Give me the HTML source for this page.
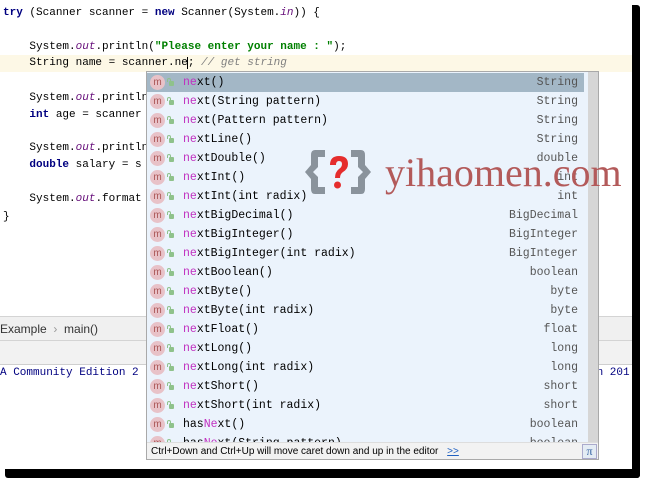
<!DOCTYPE html>
<html><head><meta charset="utf-8"><style>
*{margin:0;padding:0;box-sizing:border-box}
body{width:647px;height:484px;background:#fff;position:relative;overflow:hidden;font-family:"Liberation Mono",monospace}
.sh1{position:absolute;left:632px;top:5px;width:8px;height:473px;background:#000;border-radius:0 3px 3px 0}
.sh2{position:absolute;left:5px;top:469px;width:635px;height:9px;background:#000;border-radius:0 0 3px 3px}
.main{position:absolute;left:0;top:0;width:632px;height:469px;background:#fff;overflow:hidden}
.ln{position:absolute;left:3px;font-size:11px;white-space:pre;color:#000;line-height:14px}
.kw{color:#000080;font-weight:bold}
.st{color:#008000;font-weight:bold}
.fd{color:#660e7a;font-style:italic}
.cm{color:#808080;font-style:italic}
.hl{position:absolute;left:0;top:55px;width:632px;height:17px;background:#fdf8e6}
.bar1{position:absolute;left:0;top:316px;width:632px;height:25px;background:#f0f0f0;border-top:1px solid #d4d4d4;border-bottom:1px solid #d4d4d4;font-family:"Liberation Sans",sans-serif;font-size:12px;color:#333;line-height:25px}
.bar2{position:absolute;left:0;top:341px;width:632px;height:24px;background:#f2f2f2;border-bottom:1px solid #cfcfcf}
.con{position:absolute;top:366px;font-size:11px;color:#000080;white-space:pre;line-height:14px}
.pop{position:absolute;left:146px;top:71px;width:453px;height:389px;border:1px solid #a9a9a9;background:#ebf3fc;overflow:hidden}
.row{position:absolute;left:0;width:437px;height:19px;font-size:11.5px;line-height:19px;color:#000}
.row.sel{background:#a3b7c6}
.ic{position:absolute;left:3px;top:2px;width:15px;height:15px;border-radius:50%;background:#e8c2c8;color:#a55;font-family:"Liberation Sans",sans-serif;font-size:10px;line-height:15px;text-align:center}
.lk{position:absolute;left:22px;top:8px;width:5px;height:5px;background:#8fc28b;border-radius:1px}
.lk:before{content:"";position:absolute;left:-2px;top:-3px;width:2px;height:3px;border:1px solid #8fc28b;border-bottom:none;border-radius:2px 2px 0 0}
.nm{position:absolute;left:36px}
.nm b{color:#c030c0;font-weight:normal}
.ty{position:absolute;right:6px;color:#555}
.sb{position:absolute;left:441px;top:0;width:11px;height:370px;background:#d6d6d6}
.ft{position:absolute;left:0;top:370px;width:451px;height:18px;background:#f2f2f2;border-top:1px solid #ddd;font-family:"Liberation Sans",sans-serif;font-size:10px;line-height:17px;padding-left:4px;color:#000}
.ft u{color:#2060c0;margin-left:6px}
.pi{position:absolute;right:1px;top:1px;width:15px;height:15px;border:1px solid #aac;background:#e4ecf4;color:#3060a0;font-size:12px;line-height:13px;text-align:center;font-family:"Liberation Serif",serif}
.wm{position:absolute;left:385px;top:148px;font-family:"Liberation Serif",serif;font-size:40px;color:#b35a5a;line-height:50px}
</style></head><body>
<div class="sh1"></div><div class="sh2"></div>
<div class="main">
<div class="hl"></div>
<div class="ln" style="top:6px"><span class="kw">try</span> (Scanner scanner = <span class="kw">new</span> Scanner(System.<span class="fd">in</span>)) {</div>
<div class="ln" style="top:40px">    System.<span class="fd">out</span>.println(<span class="st">"Please enter your name : "</span>);</div>
<div class="ln" style="top:56px">    String name = scanner.ne<span style="border-left:1px solid #000;margin-left:-1px"></span>; <span class="cm">// get string</span></div>
<div class="ln" style="top:91px">    System.<span class="fd">out</span>.println</div>
<div class="ln" style="top:108px">    <span class="kw">int</span> age = scanner</div>
<div class="ln" style="top:141px">    System.<span class="fd">out</span>.println</div>
<div class="ln" style="top:158px">    <span class="kw">double</span> salary = s</div>
<div class="ln" style="top:192px">    System.<span class="fd">out</span>.format</div>
<div class="ln" style="top:210px">}</div>
<div class="bar1">Example &nbsp;<span style="color:#999">›</span>&nbsp; main()</div>
<div class="bar2"></div>
<div class="con" style="left:0">A Community Edition 2</div>
<div class="con" style="left:590px">on 201</div>
</div>
<div class="pop">
<div class="row sel" style="top:1px"><span class="ic">m</span><span class="lk"></span><span class="nm"><b>ne</b>xt()</span><span class="ty">String</span></div>
<div class="row" style="top:20px"><span class="ic">m</span><span class="lk"></span><span class="nm"><b>ne</b>xt(String pattern)</span><span class="ty">String</span></div>
<div class="row" style="top:39px"><span class="ic">m</span><span class="lk"></span><span class="nm"><b>ne</b>xt(Pattern pattern)</span><span class="ty">String</span></div>
<div class="row" style="top:58px"><span class="ic">m</span><span class="lk"></span><span class="nm"><b>ne</b>xtLine()</span><span class="ty">String</span></div>
<div class="row" style="top:77px"><span class="ic">m</span><span class="lk"></span><span class="nm"><b>ne</b>xtDouble()</span><span class="ty">double</span></div>
<div class="row" style="top:96px"><span class="ic">m</span><span class="lk"></span><span class="nm"><b>ne</b>xtInt()</span><span class="ty">int</span></div>
<div class="row" style="top:115px"><span class="ic">m</span><span class="lk"></span><span class="nm"><b>ne</b>xtInt(int radix)</span><span class="ty">int</span></div>
<div class="row" style="top:134px"><span class="ic">m</span><span class="lk"></span><span class="nm"><b>ne</b>xtBigDecimal()</span><span class="ty">BigDecimal</span></div>
<div class="row" style="top:153px"><span class="ic">m</span><span class="lk"></span><span class="nm"><b>ne</b>xtBigInteger()</span><span class="ty">BigInteger</span></div>
<div class="row" style="top:172px"><span class="ic">m</span><span class="lk"></span><span class="nm"><b>ne</b>xtBigInteger(int radix)</span><span class="ty">BigInteger</span></div>
<div class="row" style="top:191px"><span class="ic">m</span><span class="lk"></span><span class="nm"><b>ne</b>xtBoolean()</span><span class="ty">boolean</span></div>
<div class="row" style="top:210px"><span class="ic">m</span><span class="lk"></span><span class="nm"><b>ne</b>xtByte()</span><span class="ty">byte</span></div>
<div class="row" style="top:229px"><span class="ic">m</span><span class="lk"></span><span class="nm"><b>ne</b>xtByte(int radix)</span><span class="ty">byte</span></div>
<div class="row" style="top:248px"><span class="ic">m</span><span class="lk"></span><span class="nm"><b>ne</b>xtFloat()</span><span class="ty">float</span></div>
<div class="row" style="top:267px"><span class="ic">m</span><span class="lk"></span><span class="nm"><b>ne</b>xtLong()</span><span class="ty">long</span></div>
<div class="row" style="top:286px"><span class="ic">m</span><span class="lk"></span><span class="nm"><b>ne</b>xtLong(int radix)</span><span class="ty">long</span></div>
<div class="row" style="top:305px"><span class="ic">m</span><span class="lk"></span><span class="nm"><b>ne</b>xtShort()</span><span class="ty">short</span></div>
<div class="row" style="top:324px"><span class="ic">m</span><span class="lk"></span><span class="nm"><b>ne</b>xtShort(int radix)</span><span class="ty">short</span></div>
<div class="row" style="top:343px"><span class="ic">m</span><span class="lk"></span><span class="nm">has<b>Ne</b>xt()</span><span class="ty">boolean</span></div>
<div class="row" style="top:362px"><span class="ic">m</span><span class="lk"></span><span class="nm">has<b>Ne</b>xt(String pattern)</span><span class="ty">boolean</span></div>
<div class="sb"></div>
<div class="ft">Ctrl+Down and Ctrl+Up will move caret down and up in the editor <u>&gt;&gt;</u><span class="pi">π</span></div>
</div>
<svg style="position:absolute;left:303px;top:147px" width="70" height="50" viewBox="0 0 70 50">
<path d="M22 3 H12 Q8 3 8 8 V18 L2 25 L8 32 V42 Q8 47 12 47 H22 V40 H15 V30 L10 25 L15 20 V10 H22Z" fill="#8a939c"/>
<path d="M48 3 H58 Q62 3 62 8 V18 L68 25 L62 32 V42 Q62 47 58 47 H48 V40 H55 V30 L60 25 L55 20 V10 H48Z" fill="#8a939c"/>
<path d="M27 18 Q27 9 36 9 Q45 9 45 17 Q45 22 40 25 Q37 27 37 31 H32 Q32 25 36 22 Q39 20 39 17 Q39 14 36 14 Q33 14 33 18Z" fill="#e52d2d"/>
<circle cx="34.5" cy="38" r="3.5" fill="#e52d2d"/>
</svg>
<div class="wm">yihaomen.com</div>
</body></html>
